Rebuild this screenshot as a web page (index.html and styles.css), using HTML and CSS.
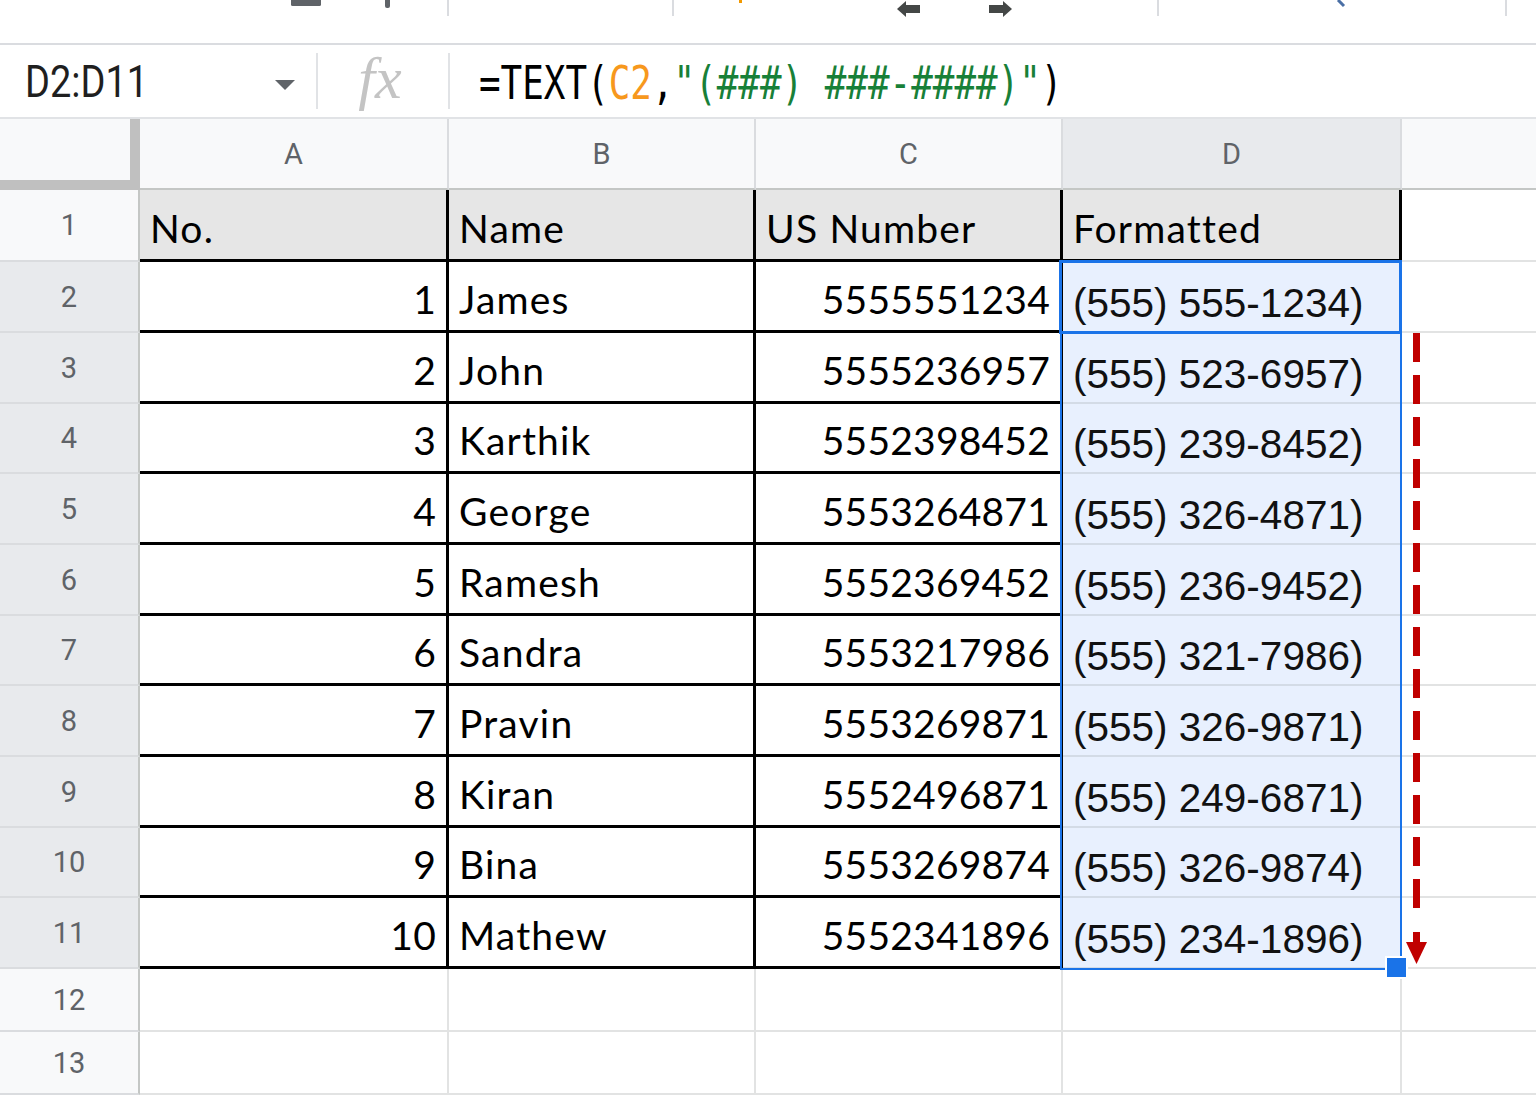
FILE: index.html
```html
<!DOCTYPE html>
<html>
<head>
<meta charset="utf-8">
<link rel="stylesheet" href="styles.css">
</head>
<body>
<div class="toolbar">
  <svg class="tb-icons" width="1536" height="43" viewBox="0 0 1536 43">
    <rect x="291" y="-3" width="30" height="9" rx="1.5" fill="#5f6368"/>
    <rect x="385" y="-2" width="5" height="10" rx="2" fill="#5f6368"/>
    <rect x="447" y="0" width="2" height="16" fill="#dadce0"/>
    <rect x="672" y="0" width="2" height="16" fill="#dadce0"/>
    <rect x="739" y="0" width="3" height="3" fill="#f29900"/>
    <path d="M897 9 L906 1 L906 5 L920 5 L920 13 L906 13 L906 17 Z" fill="#444746"/>
    <path d="M1012 9 L1003 1 L1003 5 L989 5 L989 13 L1003 13 L1003 17 Z" fill="#444746"/>
    <rect x="1157" y="0" width="2" height="16" fill="#dadce0"/>
    <path d="M1338 0 L1344 6" stroke="#4a6fa5" stroke-width="3"/>
    <rect x="1505" y="0" width="2" height="16" fill="#dadce0"/>
  </svg>
</div>
<div class="fbar">
  <div class="namebox"><span class="nb-text">D2:D11</span><span class="caret"></span></div>
  <div class="fx"><span>fx</span></div>
  <div class="formula"><span class="ftext">=TEXT(<span class="ref">C2</span>,<span class="str">"(###) ###-####)"</span>)</span></div>
</div>
<div class="sheet">
  <div class="corner"></div>
  <div class="colh">A</div>
  <div class="colh">B</div>
  <div class="colh">C</div>
  <div class="colh selh">D</div>
  <div class="colh last"></div>

  <div class="rowh">1</div>
  <div class="c t h txt">No.</div>
  <div class="c t h txt">Name</div>
  <div class="c t h txt">US Number</div>
  <div class="c t h txt">Formatted</div>
  <div class="c last"></div>

  <div class="rowh selh">2</div>
  <div class="c t num">1</div>
  <div class="c t txt">James</div>
  <div class="c t num">5555551234</div>
  <div class="c fmt">(555) 555-1234)</div>
  <div class="c last"></div>

  <div class="rowh selh">3</div>
  <div class="c t num">2</div>
  <div class="c t txt">John</div>
  <div class="c t num">5555236957</div>
  <div class="c fmt">(555) 523-6957)</div>
  <div class="c last"></div>

  <div class="rowh selh">4</div>
  <div class="c t num">3</div>
  <div class="c t txt">Karthik</div>
  <div class="c t num">5552398452</div>
  <div class="c fmt">(555) 239-8452)</div>
  <div class="c last"></div>

  <div class="rowh selh">5</div>
  <div class="c t num">4</div>
  <div class="c t txt">George</div>
  <div class="c t num">5553264871</div>
  <div class="c fmt">(555) 326-4871)</div>
  <div class="c last"></div>

  <div class="rowh selh">6</div>
  <div class="c t num">5</div>
  <div class="c t txt">Ramesh</div>
  <div class="c t num">5552369452</div>
  <div class="c fmt">(555) 236-9452)</div>
  <div class="c last"></div>

  <div class="rowh selh">7</div>
  <div class="c t num">6</div>
  <div class="c t txt">Sandra</div>
  <div class="c t num">5553217986</div>
  <div class="c fmt">(555) 321-7986)</div>
  <div class="c last"></div>

  <div class="rowh selh">8</div>
  <div class="c t num">7</div>
  <div class="c t txt">Pravin</div>
  <div class="c t num">5553269871</div>
  <div class="c fmt">(555) 326-9871)</div>
  <div class="c last"></div>

  <div class="rowh selh">9</div>
  <div class="c t num">8</div>
  <div class="c t txt">Kiran</div>
  <div class="c t num">5552496871</div>
  <div class="c fmt">(555) 249-6871)</div>
  <div class="c last"></div>

  <div class="rowh selh">10</div>
  <div class="c t num">9</div>
  <div class="c t txt">Bina</div>
  <div class="c t num">5553269874</div>
  <div class="c fmt">(555) 326-9874)</div>
  <div class="c last"></div>

  <div class="rowh selh">11</div>
  <div class="c t num">10</div>
  <div class="c t txt">Mathew</div>
  <div class="c t num">5552341896</div>
  <div class="c fmt">(555) 234-1896)</div>
  <div class="c last"></div>

  <div class="rowh">12</div>
  <div class="c"></div>
  <div class="c"></div>
  <div class="c"></div>
  <div class="c"></div>
  <div class="c last"></div>

  <div class="rowh">13</div>
  <div class="c"></div>
  <div class="c"></div>
  <div class="c"></div>
  <div class="c"></div>
  <div class="c last"></div>

  <div class="sel-range"></div>
  <div class="active-cell"></div>
  <div class="fill-handle"></div>
  <svg class="drag-arrow" width="40" height="640" viewBox="0 0 40 640">
    <line x1="16.5" y1="3" x2="16.5" y2="580" stroke="#c00000" stroke-width="7" stroke-dasharray="29 13"/>
    <rect x="13" y="602" width="7" height="12" fill="#c00000"/>
    <polygon points="6,612 27,612 16.5,634" fill="#c00000"/>
  </svg>
</div>
</body>
</html>
```

FILE: styles.css
```css
html, body {
  margin: 0;
  padding: 0;
  background: #ffffff;
}
body {
  width: 1536px;
  height: 1095px;
  overflow: hidden;
  font-family: Roboto, "Liberation Sans", sans-serif;
}

.toolbar {
  height: 43px;
  border-bottom: 2px solid #dadce0;
  overflow: hidden;
}
.tb-icons {
  display: block;
}

.fbar {
  height: 72px;
  border-bottom: 2px solid #e1e3e6;
  display: flex;
  align-items: center;
}
.namebox {
  width: 316px;
  height: 100%;
  box-sizing: border-box;
  padding-left: 25px;
  padding-right: 21px;
  display: flex;
  align-items: center;
  justify-content: space-between;
}
.nb-text {
  display: inline-block;
  font-family: Roboto, sans-serif;
  font-size: 38px;
  color: #1f1f1f;
  transform: scaleY(1.15);
  margin-top: 2px;
}
.caret {
  width: 0;
  height: 0;
  border-left: 10px solid transparent;
  border-right: 10px solid transparent;
  border-top: 10px solid #5f6368;
  margin-top: 8px;
}
.fx {
  width: 134px;
  height: 56px;
  border-left: 2px solid #e1e3e6;
  border-right: 2px solid #e1e3e6;
  box-sizing: border-box;
  display: flex;
  align-items: center;
  justify-content: center;
}
.fx span {
  font-family: "Liberation Serif", serif;
  font-style: italic;
  font-size: 60px;
  color: #c4c4c4;
  margin-left: -6px;
  margin-top: -6px;
}
.formula {
  padding-left: 29px;
  display: flex;
  align-items: center;
}
.ftext {
  display: inline-block;
  font-family: "DejaVu Sans Mono", monospace;
  font-size: 35.9px;
  color: #000;
  transform: scaleY(1.3);
  white-space: pre;
  margin-top: 2px;
}
.ref { color: #f7981d; }
.str { color: #188038; }

.sheet {
  position: relative;
  display: grid;
  grid-template-columns: 140px 309px 307px 307px 339px 134px;
  grid-template-rows: 71px 72px 71px 71px 70px 71px 71px 70px 71px 71px 70px 71px 63px 63px;
}

.corner {
  background: #f8f9fa;
  border-right: 10px solid #c0c0c0;
  border-bottom: 10px solid #c0c0c0;
}
.colh {
  background: #f8f9fa;
  border-right: 2px solid #dadcdf;
  border-bottom: 2px solid #c4c7c5;
  display: flex;
  align-items: center;
  justify-content: center;
  font-family: Roboto, sans-serif;
  font-size: 29px;
  color: #5f6368;
}
.rowh {
  background: #f8f9fa;
  border-right: 2px solid #c4c7c5;
  border-bottom: 2px solid #dadcdf;
  display: flex;
  align-items: center;
  justify-content: center;
  font-family: Roboto, sans-serif;
  font-size: 29px;
  color: #5f6368;
}
.colh.selh, .rowh.selh {
  background: #e8eaed;
}
.colh.last { border-right: none; }

.c {
  border-right: 2px solid #e2e3e3;
  border-bottom: 2px solid #e2e3e3;
  display: flex;
  align-items: flex-end;
  font-family: Lato, "Open Sans", sans-serif;
  font-size: 39px;
  line-height: 39px;
  color: #000;
  padding-bottom: 11px;
  white-space: nowrap;
  overflow: hidden;
}
.c.last { border-right: none; }
.c.t {
  border-right: 3px solid #000;
  border-bottom: 3px solid #000;
}
.c.h {
  background: #e6e6e6;
}
.c.txt {
  padding-left: 10px;
  letter-spacing: 1.2px;
}
.c.num {
  justify-content: flex-end;
  padding-right: 10px;
  letter-spacing: 0.2px;
}
.c.fmt {
  background: #e8f0fe;
  border-bottom: 2px solid #d3dbe6;
  font-family: "Liberation Sans", Arial, sans-serif;
  font-size: 40.5px;
  line-height: 40px;
  padding-left: 10px;
  padding-bottom: 8px;
  color: #111;
}

.sel-range {
  position: absolute;
  left: 1060px;
  top: 141px;
  width: 342px;
  height: 710px;
  box-sizing: border-box;
  border: 2px solid #1a73e8;
  pointer-events: none;
}
.active-cell {
  position: absolute;
  left: 1059px;
  top: 141px;
  width: 343px;
  height: 74px;
  box-sizing: border-box;
  border: 3px solid #1a73e8;
}
.fill-handle {
  position: absolute;
  left: 1385px;
  top: 837px;
  width: 23px;
  height: 23px;
  box-sizing: border-box;
  background: #1a73e8;
  border: 2px solid #ffffff;
}
.drag-arrow {
  position: absolute;
  left: 1400px;
  top: 211px;
}
```
